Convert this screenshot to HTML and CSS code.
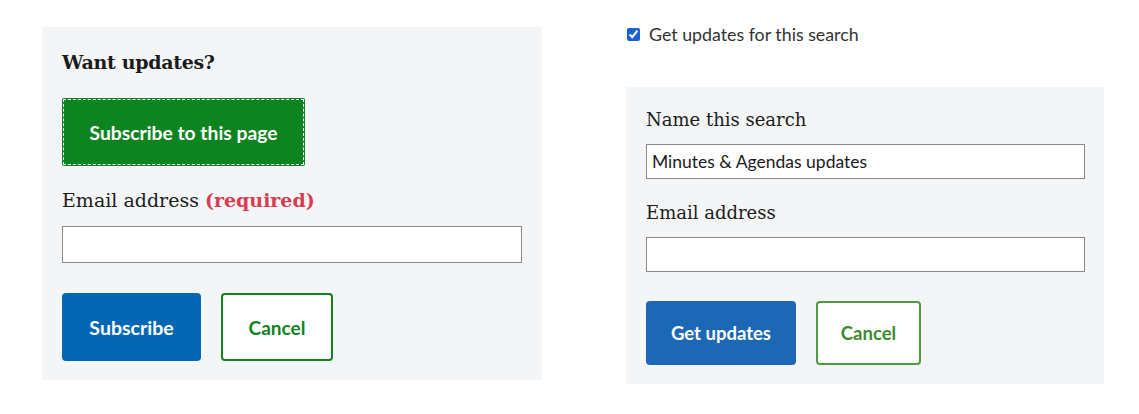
FILE: index.html
```html
<!DOCTYPE html>
<html lang="en">
<head>
<meta charset="utf-8">
<title>Updates</title>
<link rel="stylesheet" href="styles.css">
</head>
<body>
<div class="page">
  <section class="panel panel-left">
    <h2 class="heading">Want updates?</h2>
    <button class="btn btn-green btn-focus" type="button">Subscribe to this page</button>
    <label class="label label-email" for="email1">Email address <span class="required">(required)</span></label>
    <input class="field field-left" id="email1" type="text">
    <div class="actions">
      <button class="btn btn-blue btn-subscribe" type="button">Subscribe</button>
      <button class="btn btn-outline btn-cancel-left" type="button">Cancel</button>
    </div>
  </section>
  <div class="right-col">
    <label class="check-row">
      <input class="check" type="checkbox" checked>
      <span class="check-label">Get updates for this search</span>
    </label>
    <section class="panel panel-right">
      <label class="label label-r" for="name2">Name this search</label>
      <input class="field field-right" id="name2" type="text" value="Minutes &amp; Agendas updates">
      <label class="label label-r label-r2" for="email2">Email address</label>
      <input class="field field-right" id="email2" type="text">
      <div class="actions actions-right">
        <button class="btn btn-blue2 btn-get" type="button">Get updates</button>
        <button class="btn btn-outline2 btn-cancel-right" type="button">Cancel</button>
      </div>
    </section>
  </div>
</div>
</body>
</html>
```

FILE: styles.css
```css
* { box-sizing: border-box; }
html, body { margin: 0; padding: 0; background: #fff; }
body { font-family: "DejaVu Serif", serif; color: #1b1b1b; }

.page {
  display: flex;
  align-items: flex-start;
  padding: 27px 0 0 42px;
  gap: 84px;
}

.panel {
  background: #f4f5f7;
  display: flex;
  flex-direction: column;
  align-items: flex-start;
}

.panel-left {
  width: 500px;
  padding: 20px 20px 19px 20px;
}

.heading {
  margin: 0;
  font-size: 19px;
  line-height: 30px;
  font-weight: bold;
  color: #1b1b1b;
  letter-spacing: -0.3px;
}

.btn {
  font-family: "Lato", "Liberation Sans", sans-serif;
  font-weight: bold;
  border: none;
  border-radius: 4px;
  cursor: pointer;
  display: flex;
  align-items: center;
  justify-content: center;
  padding: 0;
}

.btn-green {
  margin-top: 21px;
  width: 243px;
  height: 68px;
  background: #0e8420;
  color: #fff;
  font-size: 19.3px;
  border-radius: 2px;
}
.btn-focus {
  outline: 1px dashed #fff;
  outline-offset: -2px;
}

.label {
  display: block;
  font-size: 19px;
  line-height: 28px;
  color: #1b1b1b;
}
.label-email { margin-top: 20px; }
.required { color: #d63e51; font-weight: bold; }

.field {
  display: block;
  background: #fff;
  border: 1px solid #8a8a8a;
  border-radius: 0;
  font-family: "Lato", "Liberation Sans", sans-serif;
  font-size: 17.5px;
  color: #1b1b1b;
  margin: 0;
}
.field-left {
  margin-top: 12px;
  width: 460px;
  height: 37px;
}

.actions {
  display: flex;
  gap: 20px;
  margin-top: 30px;
}
.btn-blue {
  width: 139px;
  height: 68px;
  background: #0567b3;
  color: #fff;
  font-size: 19.5px;
}
.btn-outline {
  width: 112px;
  height: 68px;
  background: #fff;
  border: 2px solid #10821f;
  color: #10821f;
  font-size: 19px;
}

.right-col {
  display: flex;
  flex-direction: column;
  align-items: flex-start;
}

.check-row {
  display: flex;
  align-items: center;
  height: 15px;
  font-family: "Lato", "Liberation Sans", sans-serif;
  font-size: 17.8px;
  color: #333;
  cursor: pointer;
}
.check {
  width: 13px;
  height: 13px;
  margin: 0 9px 0 1px;
  accent-color: #1c5fd1;
}
.check-label { line-height: 15px; }

.panel-right {
  margin-top: 45px;
  width: 478px;
  padding: 19px 20px 19px 20px;
}
.label-r { font-size: 18px; }
.label-r2 { margin-top: 20px; }
.field-right {
  margin-top: 10px;
  width: 439px;
  height: 35px;
  padding: 0 5px;
}
.actions-right {
  margin-top: 29px;
  gap: 20px;
}
.btn-blue2 {
  width: 150px;
  height: 64px;
  background: #1c68b4;
  color: #fff;
  font-size: 18.5px;
}
.btn-outline2 {
  width: 105px;
  height: 64px;
  background: #fff;
  border: 2px solid #4e9c3f;
  color: #3d8a2e;
  font-size: 18.5px;
}
```
